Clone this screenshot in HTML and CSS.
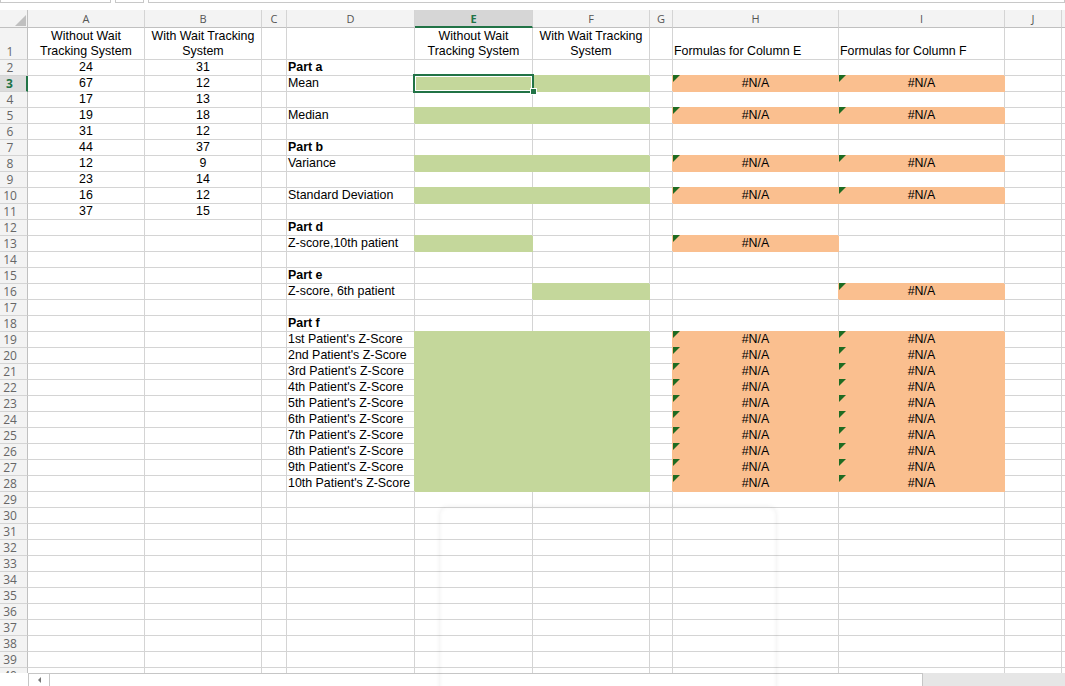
FILE: index.html
```html
<!DOCTYPE html>
<html>
<head>
    <title>Wait Tracking - Sheet1</title>
    <link rel="stylesheet" href="styles.css">
</head>
<body>
    <div class="topbar">
        <div class="box namebox"></div>
        <div class="box fxbox"></div>
        <div class="box formula"></div>
    </div>

    <div class="sheet">
        <div class="grid">
            <!-- column headers -->
            <div class="corner"></div><div class="ch">A</div><div class="ch">B</div><div class="ch">C</div><div class="ch">D</div><div class="ch on">E</div><div class="ch">F</div><div class="ch">G</div><div class="ch">H</div><div class="ch">I</div><div class="ch">J</div><div class="ch"></div>

            <!-- row 1 -->
            <div class="rh">1</div><div class="ctr wrap">Without Wait Tracking System</div><div class="ctr wrap">With Wait Tracking System</div><div></div><div></div><div class="ctr wrap">Without Wait Tracking System</div><div class="ctr wrap">With Wait Tracking System</div><div></div><div>Formulas for Column E</div><div>Formulas for Column F</div><div></div><div></div>
            <!-- row 2 -->
            <div class="rh">2</div><div class="ctr">24</div><div class="ctr">31</div><div></div><div class="b">Part a</div><div></div><div></div><div></div><div></div><div></div><div></div><div></div>
            <!-- row 3 -->
            <div class="rh on">3</div><div class="ctr">67</div><div class="ctr">12</div><div></div><div>Mean</div><div class="g active"><span class="selbox"></span><span class="handle"></span></div><div class="g"></div><div></div><div class="o t ctr">#N/A</div><div class="o t ctr">#N/A</div><div></div><div></div>
            <!-- row 4 -->
            <div class="rh">4</div><div class="ctr">17</div><div class="ctr">13</div><div></div><div></div><div></div><div></div><div></div><div></div><div></div><div></div><div></div>
            <!-- row 5 -->
            <div class="rh">5</div><div class="ctr">19</div><div class="ctr">18</div><div></div><div>Median</div><div class="g"></div><div class="g"></div><div></div><div class="o t ctr">#N/A</div><div class="o t ctr">#N/A</div><div></div><div></div>
            <!-- row 6 -->
            <div class="rh">6</div><div class="ctr">31</div><div class="ctr">12</div><div></div><div></div><div></div><div></div><div></div><div></div><div></div><div></div><div></div>
            <!-- row 7 -->
            <div class="rh">7</div><div class="ctr">44</div><div class="ctr">37</div><div></div><div class="b">Part b</div><div></div><div></div><div></div><div></div><div></div><div></div><div></div>
            <!-- row 8 -->
            <div class="rh">8</div><div class="ctr">12</div><div class="ctr">9</div><div></div><div>Variance</div><div class="g"></div><div class="g"></div><div></div><div class="o t ctr">#N/A</div><div class="o t ctr">#N/A</div><div></div><div></div>
            <!-- row 9 -->
            <div class="rh">9</div><div class="ctr">23</div><div class="ctr">14</div><div></div><div></div><div></div><div></div><div></div><div></div><div></div><div></div><div></div>
            <!-- row 10 -->
            <div class="rh">10</div><div class="ctr">16</div><div class="ctr">12</div><div></div><div>Standard Deviation</div><div class="g"></div><div class="g"></div><div></div><div class="o t ctr">#N/A</div><div class="o t ctr">#N/A</div><div></div><div></div>
            <!-- row 11 -->
            <div class="rh">11</div><div class="ctr">37</div><div class="ctr">15</div><div></div><div></div><div></div><div></div><div></div><div></div><div></div><div></div><div></div>
            <!-- row 12 -->
            <div class="rh">12</div><div></div><div></div><div></div><div class="b">Part d</div><div></div><div></div><div></div><div></div><div></div><div></div><div></div>
            <!-- row 13 -->
            <div class="rh">13</div><div></div><div></div><div></div><div>Z-score,10th patient</div><div class="g"></div><div></div><div></div><div class="o t ctr">#N/A</div><div></div><div></div><div></div>
            <!-- row 14 -->
            <div class="rh">14</div><div></div><div></div><div></div><div></div><div></div><div></div><div></div><div></div><div></div><div></div><div></div>
            <!-- row 15 -->
            <div class="rh">15</div><div></div><div></div><div></div><div class="b">Part e</div><div></div><div></div><div></div><div></div><div></div><div></div><div></div>
            <!-- row 16 -->
            <div class="rh">16</div><div></div><div></div><div></div><div>Z-score, 6th patient</div><div></div><div class="g"></div><div></div><div></div><div class="o t ctr">#N/A</div><div></div><div></div>
            <!-- row 17 -->
            <div class="rh">17</div><div></div><div></div><div></div><div></div><div></div><div></div><div></div><div></div><div></div><div></div><div></div>
            <!-- row 18 -->
            <div class="rh">18</div><div></div><div></div><div></div><div class="b">Part f</div><div></div><div></div><div></div><div></div><div></div><div></div><div></div>
            <!-- rows 19-28: z-scores -->
            <div class="rh">19</div><div></div><div></div><div></div><div>1st Patient's Z-Score</div><div class="g"></div><div class="g"></div><div></div><div class="o t ctr">#N/A</div><div class="o t ctr">#N/A</div><div></div><div></div>
            <div class="rh">20</div><div></div><div></div><div></div><div>2nd Patient's Z-Score</div><div class="g"></div><div class="g"></div><div></div><div class="o t ctr">#N/A</div><div class="o t ctr">#N/A</div><div></div><div></div>
            <div class="rh">21</div><div></div><div></div><div></div><div>3rd Patient's Z-Score</div><div class="g"></div><div class="g"></div><div></div><div class="o t ctr">#N/A</div><div class="o t ctr">#N/A</div><div></div><div></div>
            <div class="rh">22</div><div></div><div></div><div></div><div>4th Patient's Z-Score</div><div class="g"></div><div class="g"></div><div></div><div class="o t ctr">#N/A</div><div class="o t ctr">#N/A</div><div></div><div></div>
            <div class="rh">23</div><div></div><div></div><div></div><div>5th Patient's Z-Score</div><div class="g"></div><div class="g"></div><div></div><div class="o t ctr">#N/A</div><div class="o t ctr">#N/A</div><div></div><div></div>
            <div class="rh">24</div><div></div><div></div><div></div><div>6th Patient's Z-Score</div><div class="g"></div><div class="g"></div><div></div><div class="o t ctr">#N/A</div><div class="o t ctr">#N/A</div><div></div><div></div>
            <div class="rh">25</div><div></div><div></div><div></div><div>7th Patient's Z-Score</div><div class="g"></div><div class="g"></div><div></div><div class="o t ctr">#N/A</div><div class="o t ctr">#N/A</div><div></div><div></div>
            <div class="rh">26</div><div></div><div></div><div></div><div>8th Patient's Z-Score</div><div class="g"></div><div class="g"></div><div></div><div class="o t ctr">#N/A</div><div class="o t ctr">#N/A</div><div></div><div></div>
            <div class="rh">27</div><div></div><div></div><div></div><div>9th Patient's Z-Score</div><div class="g"></div><div class="g"></div><div></div><div class="o t ctr">#N/A</div><div class="o t ctr">#N/A</div><div></div><div></div>
            <div class="rh">28</div><div></div><div></div><div></div><div>10th Patient's Z-Score</div><div class="g"></div><div class="g"></div><div></div><div class="o t ctr">#N/A</div><div class="o t ctr">#N/A</div><div></div><div></div>
            <!-- rows 29-40: empty -->
            <div class="rh">29</div><div></div><div></div><div></div><div></div><div></div><div></div><div></div><div></div><div></div><div></div><div></div>
            <div class="rh">30</div><div></div><div></div><div></div><div></div><div></div><div></div><div></div><div></div><div></div><div></div><div></div>
            <div class="rh">31</div><div></div><div></div><div></div><div></div><div></div><div></div><div></div><div></div><div></div><div></div><div></div>
            <div class="rh">32</div><div></div><div></div><div></div><div></div><div></div><div></div><div></div><div></div><div></div><div></div><div></div>
            <div class="rh">33</div><div></div><div></div><div></div><div></div><div></div><div></div><div></div><div></div><div></div><div></div><div></div>
            <div class="rh">34</div><div></div><div></div><div></div><div></div><div></div><div></div><div></div><div></div><div></div><div></div><div></div>
            <div class="rh">35</div><div></div><div></div><div></div><div></div><div></div><div></div><div></div><div></div><div></div><div></div><div></div>
            <div class="rh">36</div><div></div><div></div><div></div><div></div><div></div><div></div><div></div><div></div><div></div><div></div><div></div>
            <div class="rh">37</div><div></div><div></div><div></div><div></div><div></div><div></div><div></div><div></div><div></div><div></div><div></div>
            <div class="rh">38</div><div></div><div></div><div></div><div></div><div></div><div></div><div></div><div></div><div></div><div></div><div></div>
            <div class="rh">39</div><div></div><div></div><div></div><div></div><div></div><div></div><div></div><div></div><div></div><div></div><div></div>
            <div class="rh">40</div><div></div><div></div><div></div><div></div><div></div><div></div><div></div><div></div><div></div><div></div><div></div>
        </div>
    </div>

    <div class="hbar">
        <div class="hbar-gap"></div>
        <div class="hbar-btn"><span class="arrow-left"></span></div>
        <div class="hbar-track"></div>
        <div class="hbar-rest"></div>
    </div>

    <div class="ghost"></div>
</body>
</html>
```

FILE: styles.css
```css
* {
    box-sizing: border-box;
}
body {
    margin: 0;
    width: 1065px;
    height: 686px;
    overflow: hidden;
    position: relative;
    background-color: #fff;
    font-family: "Liberation Sans", Arial, sans-serif;
    font-size: 12.4px;
    color: #000;
}

/* formula bar remnants at the very top */
.topbar {
    height: 10px;
    display: flex;
    gap: 4px;
}
.topbar .box {
    height: 3px;
    border: 1px solid #c8c8c8;
    border-top: 0;
}
.namebox { width: 111px; }
.fxbox { width: 29px; }
.formula { flex: 1; }

.sheet {
    height: 663px;
    overflow: hidden;
}
.grid {
    display: grid;
    grid-template-columns: 28px 117px 117px 25px 128px 118px 117px 23px 166px 166px 57px 60px;
    grid-template-rows: 18px 32px repeat(39, 16px);
}
.grid > div {
    display: flex;
    align-items: flex-end;
    padding: 0 1px;
    line-height: 15px;
    white-space: nowrap;
    border-right: 1px solid #d4d4d4;
    border-bottom: 1px solid #d4d4d4;
}
.grid > .ctr {
    justify-content: center;
    text-align: center;
}
.grid > .wrap {
    white-space: normal;
}
.grid > .b {
    font-weight: bold;
}

/* headers */
.grid > .corner {
    position: relative;
    background-color: #f3f3f3;
    border-right-color: #c0c0c0;
    border-bottom-color: #c0c0c0;
}
.corner::after {
    content: "";
    position: absolute;
    right: 1px;
    bottom: 1px;
    border-bottom: 11px solid #c0c0c0;
    border-left: 11px solid transparent;
}
.grid > .ch {
    align-items: center;
    justify-content: center;
    background-color: #f3f3f3;
    font-family: "Open Sans", sans-serif;
    font-size: 11px;
    color: #555;
    border-bottom-color: #c0c0c0;
}
.grid > .ch.on {
    background-color: #d6d6d6;
    color: #217346;
    font-weight: bold;
    border-bottom: 2px solid #217346;
}
.grid > .rh {
    justify-content: center;
    padding: 0 7px 0 0;
    background-color: #f3f3f3;
    font-family: "Open Sans", sans-serif;
    font-size: 12px;
    color: #666;
    border-right-color: #c0c0c0;
}
.grid > .rh.on {
    background-color: #dcdcdc;
    color: #217346;
    font-weight: bold;
    border-right: 2px solid #217346;
}

/* filled cells hide their gridlines */
.grid > .g {
    background-color: #c4d79b;
    border-color: #c4d79b;
    box-shadow: -1px -1px 0 0 #c4d79b;
}
.grid > .o {
    background-color: #fabf8f;
    border-color: #fabf8f;
    box-shadow: -1px -1px 0 0 #fabf8f;
}
.grid > .t {
    position: relative;
}
.t::before {
    content: "";
    position: absolute;
    left: 0;
    top: -1px;
    border-top: 7px solid #1e6b22;
    border-right: 7px solid transparent;
}

/* active cell E3 */
.grid > .active {
    position: relative;
    z-index: 2;
}
.selbox {
    position: absolute;
    left: -2px;
    top: -2px;
    width: 121px;
    height: 19px;
    border: 2px solid #217346;
    box-shadow: inset 0 0 0 1px #fff;
}
.handle {
    position: absolute;
    left: 115px;
    top: 12px;
    width: 7px;
    height: 7px;
    background-color: #217346;
    border: 1px solid #fff;
}

/* horizontal scroll bar */
.hbar {
    height: 13px;
    display: flex;
}
.hbar-gap {
    width: 28px;
}
.hbar-btn {
    width: 22px;
    border: 1px solid #c6c6c6;
    border-bottom: 0;
    display: flex;
    align-items: center;
    justify-content: center;
}
.arrow-left {
    border-right: 3px solid #777;
    border-top: 3px solid transparent;
    border-bottom: 3px solid transparent;
}
.hbar-track {
    width: 873px;
    border-top: 1px solid #c6c6c6;
    border-right: 1px solid #c6c6c6;
}
.hbar-rest {
    flex: 1;
    background-color: #e6e6e6;
}

/* faint shadow of a dismissed popup */
.ghost {
    position: absolute;
    left: 440px;
    top: 507px;
    width: 336px;
    height: 200px;
    border-radius: 7px;
    box-shadow: 0 0 5px rgba(0,0,0,0.08), inset 0 0 4px rgba(0,0,0,0.05);
    pointer-events: none;
    z-index: 5;
}
```
